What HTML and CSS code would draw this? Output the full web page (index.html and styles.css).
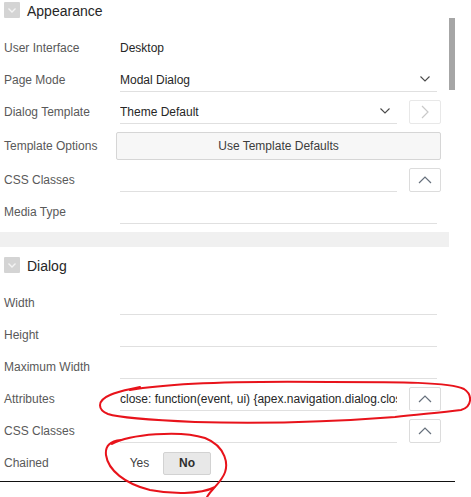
FILE: index.html
```html
<!DOCTYPE html>
<html lang="en">
<head>
<meta charset="utf-8">
<title>Page properties</title>
<link rel="stylesheet" href="styles.css">
</head>
<body>
<div class="page">
  <div class="panel">
    <section class="group">
      <div class="group-head">
        <span class="toggle"><svg width="16" height="16" viewBox="0 0 16 16"><path d="M4.5 6.5 L8 10 L11.5 6.5" fill="none" stroke="#f4f4f4" stroke-width="1.4"/></svg></span>
        <span class="group-title">Appearance</span>
      </div>
      <div class="row">
        <div class="label">User Interface</div>
        <div class="value">Desktop</div>
      </div>
      <div class="row">
        <div class="label">Page Mode</div>
        <div class="field select"><span class="text">Modal Dialog</span><svg class="caret" width="10" height="6" viewBox="0 0 10 6"><path d="M0.5 0.5 L5 5 L9.5 0.5" fill="none" stroke="#4a4a4a" stroke-width="1.1"/></svg></div>
      </div>
      <div class="row">
        <div class="label">Dialog Template</div>
        <div class="field select short"><span class="text">Theme Default</span><svg class="caret" width="10" height="6" viewBox="0 0 10 6"><path d="M0.5 0.5 L5 5 L9.5 0.5" fill="none" stroke="#4a4a4a" stroke-width="1.1"/></svg></div>
        <button class="icon-btn disabled" type="button"><svg width="8" height="14" viewBox="0 0 8 14"><path d="M1 1 L7 7 L1 13" fill="none" stroke="#c9c9c9" stroke-width="1.2"/></svg></button>
      </div>
      <div class="row tall">
        <div class="label btn-label">Template Options</div>
        <button class="wide-btn" type="button">Use Template Defaults</button>
      </div>
      <div class="row short-row">
        <div class="label">CSS Classes</div>
        <div class="field short"></div>
        <button class="icon-btn" type="button"><svg width="14" height="8" viewBox="0 0 14 8"><path d="M1 7 L7 1 L13 7" fill="none" stroke="#66707c" stroke-width="1.2"/></svg></button>
      </div>
      <div class="row">
        <div class="label">Media Type</div>
        <div class="field"></div>
      </div>
    </section>
    <div class="band"></div>
    <section class="group">
      <div class="group-head">
        <span class="toggle"><svg width="16" height="16" viewBox="0 0 16 16"><path d="M4.5 6.5 L8 10 L11.5 6.5" fill="none" stroke="#f4f4f4" stroke-width="1.4"/></svg></span>
        <span class="group-title">Dialog</span>
      </div>
      <div class="row">
        <div class="label">Width</div>
        <div class="field"></div>
      </div>
      <div class="row">
        <div class="label">Height</div>
        <div class="field"></div>
      </div>
      <div class="row">
        <div class="label">Maximum Width</div>
        <div class="field"></div>
      </div>
      <div class="row">
        <div class="label">Attributes</div>
        <div class="field short"><span class="text clip">close: function(event, ui) {apex.navigation.dialog.close(true);}</span></div>
        <button class="icon-btn" type="button"><svg width="14" height="8" viewBox="0 0 14 8"><path d="M1 7 L7 1 L13 7" fill="none" stroke="#66707c" stroke-width="1.2"/></svg></button>
      </div>
      <div class="row">
        <div class="label">CSS Classes</div>
        <div class="field short"></div>
        <button class="icon-btn" type="button"><svg width="14" height="8" viewBox="0 0 14 8"><path d="M1 7 L7 1 L13 7" fill="none" stroke="#66707c" stroke-width="1.2"/></svg></button>
      </div>
      <div class="row">
        <div class="label">Chained</div>
        <div class="switch">
          <span class="opt">Yes</span>
          <span class="opt on">No</span>
        </div>
      </div>
    </section>
    <div class="rule"></div>
  </div>
  <div class="scrollbar"></div>
  <svg class="annot" width="471" height="497" viewBox="0 0 471 497">
    <path d="M 130 390 C 170 383, 250 381, 330 382 C 400 382, 450 382, 464 389 C 473 395, 472 407, 461 410 C 440 413, 420 414, 395 417 C 330 422, 260 424, 195 422 C 150 420, 120 418, 108 414 C 98 410, 96 401, 110 395 C 118 391, 126 390, 140 387" fill="none" stroke="#e8131b" stroke-width="2" stroke-linecap="round"/>
    <path d="M 112 444 C 130 434, 180 430, 205 438 C 225 446, 231 465, 222 478 C 217 486, 211 490, 207 497 M 215 487 C 200 495, 170 494, 150 490 C 125 484, 108 470, 106 455 C 105 446, 110 441, 121 440" fill="none" stroke="#e8131b" stroke-width="2" stroke-linecap="round"/>
  </svg>
</div>
</body>
</html>
```
FILE: styles.css
```css
html, body {
  margin: 0;
  padding: 0;
  background: #ffffff;
}

body {
  font-family: "Liberation Sans", Arial, sans-serif;
  font-size: 12px;
  color: #2b2b2b;
  overflow: hidden;
}

.page {
  position: relative;
  width: 471px;
  height: 497px;
  overflow: hidden;
}

.panel {
  width: 449px;
  margin-top: -8px;
}

.group-head {
  height: 36px;
  box-sizing: border-box;
  padding: 10px 0 0 4px;
  display: flex;
  align-items: flex-start;
}

.toggle {
  width: 16px;
  height: 16px;
  background: #d4d4d4;
  border-radius: 1px;
  display: flex;
}

.group-title {
  margin-left: 7px;
  margin-top: 1px;
  font-size: 14px;
  line-height: 16px;
  color: #262626;
}

.row {
  height: 32px;
  display: flex;
  align-items: flex-end;
}

.row.tall {
  height: 36px;
}

.label {
  width: 112px;
  padding-left: 4px;
  padding-bottom: 4px;
  line-height: 16px;
  color: #595959;
  white-space: nowrap;
}

.label.btn-label {
  padding-bottom: 0;
  line-height: 28px;
}

.value {
  margin-left: 4px;
  padding-bottom: 4px;
  line-height: 16px;
  color: #262626;
}

.field {
  box-sizing: border-box;
  width: 317px;
  height: 32px;
  margin-left: 4px;
  border-bottom: 1px solid #e0e0e0;
  padding-bottom: 3px;
  display: flex;
  align-items: flex-end;
  overflow: hidden;
}

.field.short {
  width: 277px;
}

.field .text {
  line-height: 16px;
  color: #262626;
  white-space: nowrap;
}

.field.select {
  position: relative;
}

.field .caret {
  position: absolute;
  right: 7px;
  bottom: 9px;
}

.text.clip {
  overflow: hidden;
  width: 277px;
}

.icon-btn {
  box-sizing: border-box;
  width: 32px;
  height: 24px;
  margin: 0 0 0 12px;
  padding: 0;
  border: 1px solid #dcdcdc;
  border-radius: 2px;
  background: #ffffff;
  display: flex;
  align-items: center;
  justify-content: center;
}

.icon-btn.disabled {
  border-color: #e8e8e8;
}

.wide-btn {
  box-sizing: border-box;
  width: 325px;
  height: 28px;
  margin: 0;
  padding: 0;
  border: 1px solid #d6d6d6;
  border-radius: 2px;
  background: #f7f7f7;
  font-family: "Liberation Sans", Arial, sans-serif;
  font-size: 12px;
  line-height: 26px;
  color: #3c3c3c;
  text-align: center;
}

.switch {
  display: flex;
  align-items: flex-end;
}

.opt {
  box-sizing: border-box;
  width: 47px;
  height: 23px;
  line-height: 21px;
  border: 1px solid transparent;
  text-align: center;
  color: #404040;
}

.opt.on {
  width: 48px;
  background: #e8e8e8;
  border-color: #d2d2d2;
  border-radius: 2px;
  font-weight: bold;
  color: #2e2e2e;
}

.band {
  height: 15px;
  margin-top: 8px;
  background: #f0f0f0;
}

.rule {
  width: 455px;
  height: 1px;
  margin-top: 6px;
  background: #111111;
}

.scrollbar {
  position: absolute;
  left: 449px;
  top: 18px;
  width: 6px;
  height: 72px;
  background: #a6a6a6;
}

.annot {
  position: absolute;
  left: 0;
  top: 0;
  pointer-events: none;
}
```
